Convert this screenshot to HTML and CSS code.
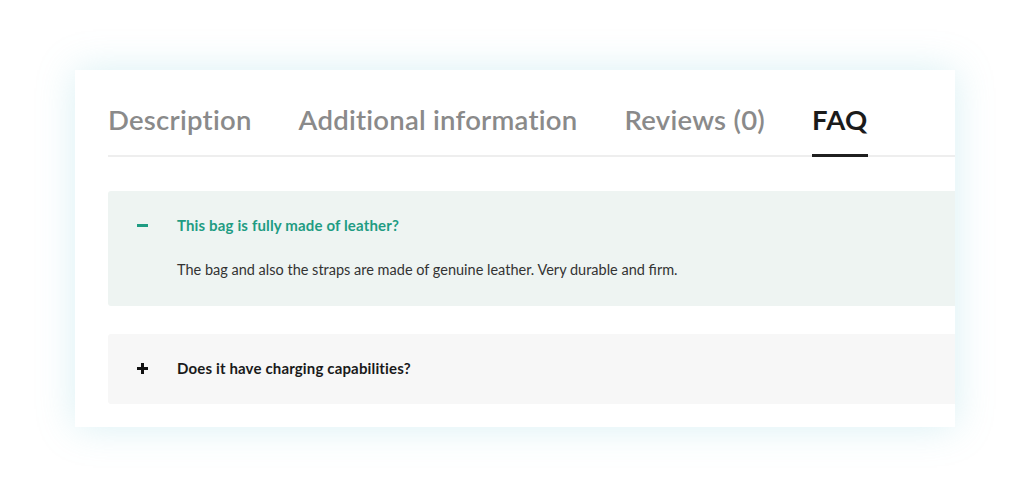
FILE: index.html
```html
<!DOCTYPE html>
<html>
<head>
<meta charset="utf-8">
<link rel="stylesheet" href="styles.css">
</head>
<body>
<div class="card">
  <div class="tabs">
    <div class="tab">Description</div>
    <div class="tab">Additional information</div>
    <div class="tab">Reviews (0)</div>
    <div class="tab active">FAQ</div>
  </div>
  <div class="faq">
    <div class="item open">
      <div class="q"><span class="icon minus"></span><span class="qt">This bag is fully made of leather?</span></div>
      <div class="a">The bag and also the straps are made of genuine leather. Very durable and firm.</div>
    </div>
    <div class="item">
      <div class="q"><span class="icon plus"></span><span class="qt">Does it have charging capabilities?</span></div>
    </div>
  </div>
</div>
</body>
</html>
```
FILE: styles.css
```css
html, body {
  margin: 0;
  padding: 0;
  background: #ffffff;
}
body {
  width: 1024px;
  height: 492px;
  overflow: hidden;
  font-family: "Lato", "Noto Sans", sans-serif;
}
.card {
  margin: 70px 0 0 75px;
  width: 880px;
  height: 357px;
  box-sizing: border-box;
  padding: 0 0 0 33px;
  background: #fff;
  overflow: hidden;
  box-shadow: 0 0 36px rgba(120, 200, 215, 0.28);
}
.tabs {
  display: flex;
  gap: 47px;
  border-bottom: 2px solid #eeeeee;
  padding-top: 33px;
}
.tab {
  font-size: 27.5px;
  letter-spacing: 0.25px;
  font-weight: 600;
  color: #8a8a8a;
  line-height: 34px;
  padding-bottom: 18px;
}
.tab.active {
  color: #1b1b1b;
  font-weight: 700;
  border-bottom: 3px solid #1f1f1f;
  margin-bottom: -2px;
  padding-bottom: 17px;
}
.faq {
  margin-top: 34px;
  display: flex;
  flex-direction: column;
  gap: 28px;
}
.item {
  background: #f7f7f7;
  border-radius: 3px 0 0 3px;
  padding: 24px 0 26px 29px;
}
.item.open {
  background: #eef4f2;
}
.q {
  display: flex;
  align-items: center;
  height: 20px;
}
.icon {
  width: 11px;
  height: 11px;
  position: relative;
  margin-right: 29px;
  flex: none;
}
.icon::before, .icon::after {
  content: "";
  position: absolute;
  background: #111;
}
.icon::before {
  left: 0;
  top: 4px;
  width: 11px;
  height: 3px;
}
.plus::after {
  left: 4px;
  top: 0;
  width: 3px;
  height: 11px;
}
.minus::before {
  background: #1f9c83;
}
.qt {
  font-size: 15px;
  letter-spacing: 0.15px;
  font-weight: 700;
  color: #1a1a1a;
}
.open .qt {
  color: #1f9c83;
}
.a {
  margin-top: 25px;
  margin-left: 40px;
  font-size: 14.5px;
  line-height: 20px;
  color: #333;
}
```
